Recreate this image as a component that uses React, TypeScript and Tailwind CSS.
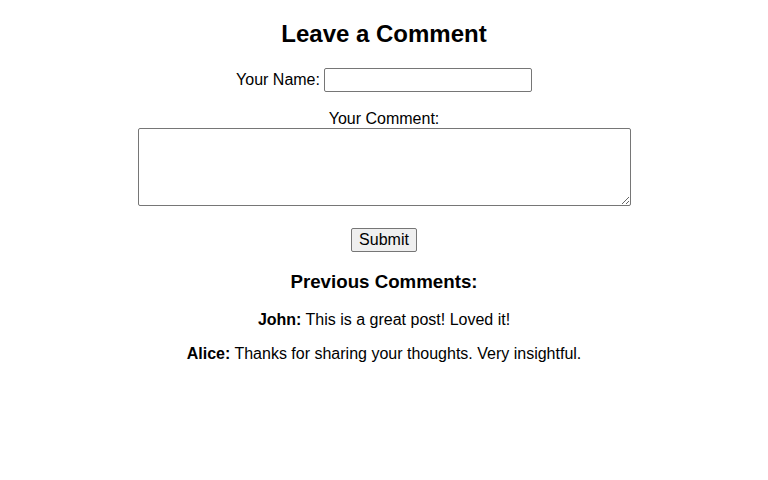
export default function App() {
  return (
    <div className="min-h-screen bg-white text-black text-center text-[16px] font-['Liberation_Sans',Arial,sans-serif]">
      <h2 className="pt-5 text-[24px] font-bold leading-[27.6px]">Leave a Comment</h2>
      <form className="mt-5" onSubmit={(e) => e.preventDefault()}>
        <div className="flex items-center justify-center gap-1 h-6">
          <label htmlFor="name" className="leading-[18px]">Your Name:</label>
          <input
            id="name"
            type="text"
            className="w-[208px] h-6 border border-[#767676] rounded-[2px] px-[2px] bg-white"
          />
        </div>
        <div className="mt-[18px] flex flex-col items-center">
          <label htmlFor="comment" className="leading-[18px] h-[18px]">Your Comment:</label>
          <textarea
            id="comment"
            className="w-[493px] h-[78px] border border-[#767676] rounded-[2px] p-[2px] bg-white block"
          />
        </div>
        <div className="mt-[22px] flex justify-center">
          <button
            type="submit"
            className="h-6 px-[7px] bg-[#efefef] border border-[#767676] rounded-[2px] leading-[18px]"
          >
            Submit
          </button>
        </div>
      </form>
      <h3 className="mt-[19px] text-[18.72px] font-bold leading-[21.5px]">Previous Comments:</h3>
      <div className="mt-[19px] flex flex-col gap-[15px]">
        <p className="leading-[18.4px]">
          <strong>John:</strong> This is a great post! Loved it!
        </p>
        <p className="leading-[18.4px]">
          <strong>Alice:</strong> Thanks for sharing your thoughts. Very insightful.
        </p>
      </div>
    </div>
  );
}
